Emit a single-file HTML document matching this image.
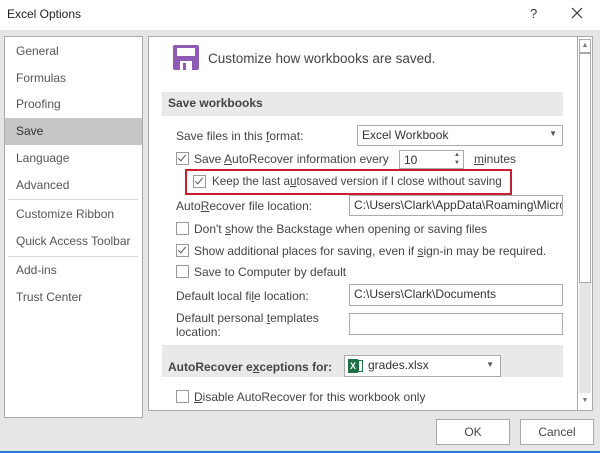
<!DOCTYPE html>
<html><head><style>
body{margin:0;width:600px;height:453px;background:#e6e6e6;font-family:"Liberation Sans",sans-serif;font-size:12px;color:#444;position:relative;overflow:hidden}
.a{position:absolute}
.t{position:absolute;white-space:nowrap}
.cb{position:absolute;width:11px;height:11px;border:1px solid #999;background:#fff}
.cb.k::after{content:"";position:absolute;left:3px;top:0px;width:3px;height:7px;border:solid #555;border-width:0 1.5px 1.5px 0;transform:rotate(40deg)}
.in{position:absolute;background:#fff;border:1px solid #aaa;box-sizing:border-box;padding:2px 4px;white-space:nowrap;overflow:hidden;color:#333}
.nav{position:absolute;left:16px;color:#555;font-size:12px}
u{text-decoration:underline}
</style></head><body>
<div class="a" style="left:0;top:0;width:600px;height:30px;background:#fff"></div>
<div class="t" style="left:7px;top:7px;color:#222;font-size:12px">Excel Options</div>
<div class="t" style="left:530px;top:6px;color:#333;font-size:13px">?</div>
<svg class="a" style="left:571px;top:7px" width="12" height="12"><path d="M1 1L11 11M11 1L1 11" stroke="#333" stroke-width="1.2"/></svg>

<div class="a" style="left:4px;top:36px;width:137px;height:380px;background:#fff;border:1px solid #aaa"></div>
<div class="a" style="left:5px;top:118px;width:137px;height:27px;background:#c6c6c6"></div>
<div class="nav" style="top:44px">General</div>
<div class="nav" style="top:71px">Formulas</div>
<div class="nav" style="top:97px">Proofing</div>
<div class="nav" style="top:124px;color:#333">Save</div>
<div class="nav" style="top:151px">Language</div>
<div class="nav" style="top:178px">Advanced</div>
<div class="a" style="left:8px;top:199px;width:130px;height:1px;background:#ddd"></div>
<div class="nav" style="top:207px">Customize Ribbon</div>
<div class="nav" style="top:234px">Quick Access Toolbar</div>
<div class="a" style="left:8px;top:256px;width:130px;height:1px;background:#ddd"></div>
<div class="nav" style="top:263px">Add-ins</div>
<div class="nav" style="top:290px">Trust Center</div>

<div class="a" style="left:148px;top:36px;width:443px;height:373px;background:#fff;border:1px solid #aaa"></div>
<div class="a" style="left:577px;top:37px;width:14px;height:373px;background:#fff;border-left:1px solid #aaa"></div>
<div class="a" style="left:579px;top:39px;width:12px;height:14px;border:1px solid #aaa;box-sizing:border-box;font-size:7px;text-align:center;line-height:12px;color:#777">▲</div>
<div class="a" style="left:579px;top:53px;width:12px;height:230px;border:1px solid #aaa;box-sizing:border-box;background:#fff"></div>
<div class="a" style="left:579px;top:283px;width:12px;height:110px;background:#e6e6e6"></div>
<div class="a" style="left:579px;top:394px;width:12px;height:14px;font-size:7px;text-align:center;line-height:14px;color:#777">▼</div>

<svg class="a" style="left:173px;top:45px" width="26" height="25" viewBox="0 0 26 25"><rect width="26" height="25" rx="2" fill="#8e5cb5"/><rect x="4" y="3" width="18" height="8" fill="#fff"/><rect x="7" y="16" width="12" height="9" fill="#fff"/><rect x="10" y="18" width="3" height="7" fill="#8e5cb5"/></svg>
<div class="t" style="left:208px;top:51px;font-size:13.5px;color:#444">Customize how workbooks are saved.</div>

<div class="a" style="left:162px;top:92px;width:401px;height:24px;background:#e9e9e9"></div>
<div class="t" style="left:168px;top:96px;font-weight:bold;font-size:12px;color:#444">Save workbooks</div>

<div class="t" style="left:176px;top:129px">Save files in this <u>f</u>ormat:</div>
<div class="in" style="left:357px;top:125px;width:206px;height:21px">Excel Workbook<span style="position:absolute;right:5px;top:3px;font-size:8px;color:#555">▼</span></div>

<div class="cb k" style="left:176px;top:152px"></div>
<div class="t" style="left:194px;top:152px">Save <u>A</u>utoRecover information every</div>
<div class="in" style="left:399px;top:150px;width:65px;height:19px">10<span style="position:absolute;right:3px;top:0;font-size:6px;line-height:8px;color:#555">▲<br>▼</span></div>
<div class="t" style="left:474px;top:152px"><u>m</u>inutes</div>

<div class="a" style="left:185px;top:169px;width:323px;height:22px;border:2px solid #c8202e"></div>
<div class="cb k" style="left:193px;top:175px"></div>
<div class="t" style="left:212px;top:175px;font-size:11.7px">Keep the last a<u>u</u>tosaved version if I close without saving</div>

<div class="t" style="left:176px;top:199px">Auto<u>R</u>ecover file location:</div>
<div class="in" style="left:349px;top:195px;width:214px;height:21px">C:\Users\Clark\AppData\Roaming\Microsoft\Excel\</div>

<div class="cb" style="left:176px;top:222px"></div>
<div class="t" style="left:194px;top:222px">Don't <u>s</u>how the Backstage when opening or saving files</div>
<div class="cb k" style="left:176px;top:244px"></div>
<div class="t" style="left:194px;top:244px">Show additional places for saving, even if <u>s</u>ign-in may be required.</div>
<div class="cb" style="left:176px;top:265px"></div>
<div class="t" style="left:194px;top:265px">Save to Computer by default</div>

<div class="t" style="left:176px;top:289px">Default local fi<u>l</u>e location:</div>
<div class="in" style="left:349px;top:284px;width:214px;height:22px">C:\Users\Clark\Documents</div>
<div class="t" style="left:176px;top:311px;line-height:14px">Default personal <u>t</u>emplates<br>location:</div>
<div class="in" style="left:349px;top:313px;width:214px;height:22px"></div>

<div class="a" style="left:162px;top:345px;width:401px;height:32px;background:#e9e9e9"></div>
<div class="t" style="left:168px;top:360px;font-weight:bold;color:#444">AutoRecover e<u>x</u>ceptions for:</div>
<div class="in" style="left:344px;top:355px;width:157px;height:22px;padding-left:23px">grades.xlsx<span style="position:absolute;right:6px;top:4px;font-size:8px;color:#555">▼</span></div>
<div class="a" style="left:348px;top:359px;width:10px;height:14px;background:#1f7145;color:#fff;font-size:9px;font-weight:bold;line-height:14px;text-align:center">X</div>
<div class="a" style="left:358px;top:360px;width:5px;height:12px;border:1px solid #1f7145;box-sizing:border-box;background:#fff"></div>

<div class="cb" style="left:176px;top:390px"></div>
<div class="t" style="left:194px;top:390px"><u>D</u>isable AutoRecover for this workbook only</div>

<div class="a" style="left:436px;top:419px;width:74px;height:26px;border:1px solid #aaa;box-sizing:border-box;background:#fff;text-align:center;line-height:24px;color:#444">OK</div>
<div class="a" style="left:520px;top:419px;width:74px;height:26px;border:1px solid #aaa;box-sizing:border-box;background:#fff;text-align:center;line-height:24px;color:#444">Cancel</div>
<div class="a" style="left:0;top:451px;width:600px;height:2px;background:#2b7bd0"></div>
</body></html>
